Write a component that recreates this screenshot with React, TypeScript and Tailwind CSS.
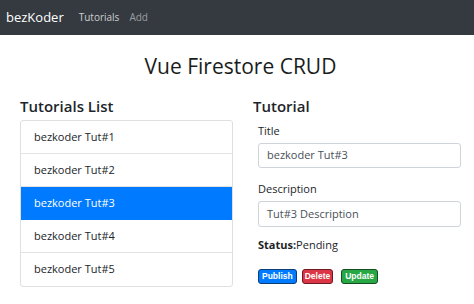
const items = ["bezkoder Tut#1", "bezkoder Tut#2", "bezkoder Tut#3", "bezkoder Tut#4", "bezkoder Tut#5"];

export default function App() {
  return (
    <div className="w-[474px] h-[304px] bg-white overflow-hidden font-['Open_Sans',sans-serif] text-[#212529]">
      {/* Navbar */}
      <nav className="h-[35px] bg-[#343a40] flex items-center px-[6px]">
        <span className="text-white text-[13px] mr-[15px]">bezKoder</span>
        <span className="text-[10px] text-white/75 mr-[10px]">Tutorials</span>
        <span className="text-[10px] text-white/50">Add</span>
      </nav>

      <h1 className="text-center pl-[7px] text-[21px] font-medium mt-[16px] leading-[30px] text-[#1a1d20]">Vue Firestore CRUD</h1>

      <div className="flex px-[20px] pr-[13px] mt-[14px]">
        {/* List */}
        <div className="w-[213px] shrink-0">
          <h4 className="text-[15px] font-semibold leading-[22px]">Tutorials List</h4>
          <ul className="mt-[3px] border border-[#dfdfdf] rounded-[3px] overflow-hidden">
            {items.map((t, i) => (
              <li
                key={t}
                className={
                  i === 2
                    ? "h-[33px] flex items-center pl-[13px] text-[11px] bg-[#007bff] text-white"
                    : "h-[33px] flex items-center pl-[13px] text-[11px] border-b border-[#e3e3e3] last:border-b-0"
                }
              >
                {t}
              </li>
            ))}
          </ul>
        </div>

        {/* Edit form */}
        <div className="ml-[20px] flex-1">
          <h4 className="text-[15px] font-semibold leading-[22px]">Tutorial</h4>
          <div className="ml-[5px]">
            <label className="block text-[11px] mt-[5px] leading-[17px]">Title</label>
            <div className="mt-[4px] h-[25px] border border-[#ced4da] rounded-[3px] flex items-center pl-[8px] text-[11px] text-[#495057]">
              bezkoder Tut#3
            </div>
            <label className="block text-[11px] mt-[12px] leading-[17px]">Description</label>
            <div className="mt-[4px] h-[26px] border border-[#ced4da] rounded-[3px] flex items-center pl-[8px] text-[11px] text-[#495057]">
              Tut#3 Description
            </div>
            <div className="mt-[9px] text-[11px] leading-[17px]">
              <span className="font-bold">Status:</span>Pending
            </div>
            <div className="flex gap-[5px] mt-[16px] font-['Liberation_Sans',sans-serif]">
              <span className="h-[15px] px-[3px] flex items-center rounded-[3px] border border-[#0b3e75] bg-[#007bff] text-white text-[8.5px] font-bold">Publish</span>
              <span className="h-[15px] px-[2px] flex items-center rounded-[3px] border border-[#6e1a22] bg-[#dc3545] text-white text-[8.5px] font-bold">Delete</span>
              <span className="h-[15px] px-[3px] ml-[3px] flex items-center rounded-[3px] border border-[#154d22] bg-[#28a745] text-white text-[8.5px] font-bold">Update</span>
            </div>
          </div>
        </div>
      </div>
    </div>
  );
}
